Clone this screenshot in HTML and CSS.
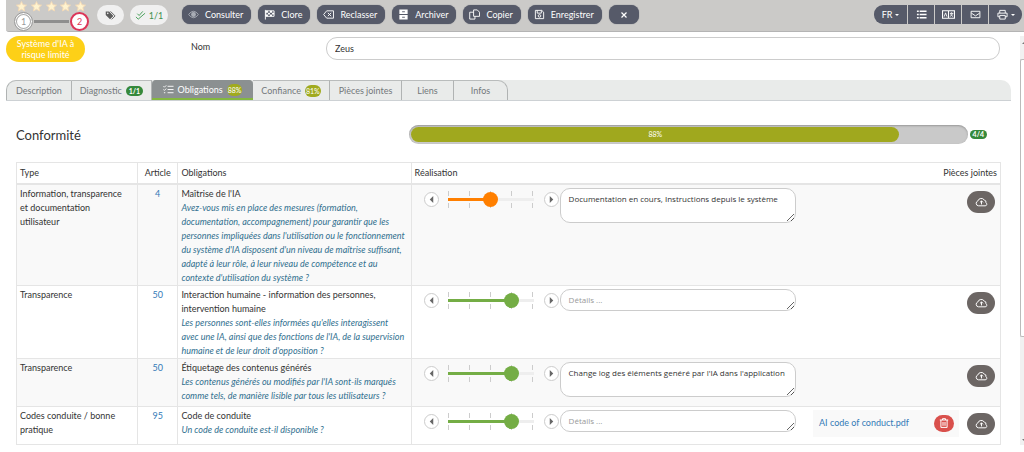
FILE: index.html
```html
<!DOCTYPE html>
<html lang="fr">
<head>
    <meta charset="UTF-8">
    <meta name="viewport" content="width=device-width, initial-scale=1.0">
    <title>Zeus - Obligations</title>
    <link rel="stylesheet" href="styles.css">
</head>
<body>
    <svg class="sprite" aria-hidden="true">
        <symbol id="star" viewBox="0 0 12 12"><path d="M6 .6l1.6 3.5 3.9.4-2.9 2.6.8 3.8L6 9 2.6 10.9l.8-3.8L.5 4.5l3.9-.4z"/></symbol>
        <symbol id="left" viewBox="0 0 8 8"><path d="M6 0v8L2 4z"/></symbol>
        <symbol id="right" viewBox="0 0 8 8"><path d="M2 0v8l4-4z"/></symbol>
        <symbol id="cloud" viewBox="0 0 16 12"><path d="M4.3 10.7a3.1 3.1 0 0 1-.8-6A4.4 4.4 0 0 1 11.4 3.6a2.6 2.6 0 0 1 2 3.3 2 2 0 0 1-.9 3.8zM8 9V4.800M6.200 6.400L8 4.600l1.800 1.800" fill="none" stroke="currentColor" stroke-width="1.200"/></symbol>
    </svg>

    <header class="toolbar">
        <div class="progress-steps">
            <div class="stars">
                <svg><use href="#star"/></svg><svg><use href="#star"/></svg><svg><use href="#star"/></svg><svg><use href="#star"/></svg><svg><use href="#star"/></svg>
            </div>
            <div class="steps">
                <span class="step">1</span>
                <span class="step-line"></span>
                <span class="step current">2</span>
            </div>
        </div>
        <div class="pills">
            <button class="pill" aria-label="Étiquettes">
                <svg class="icon" viewBox="0 0 12 12"><path d="M.8 1.500v4l4.700 4.700 3.700-3.700L4.500 1.500zM3 2.700a.9.900 0 1 1 0 1.800.9.900 0 0 1 0-1.800z" fill="#5c5c5c" fill-rule="evenodd"/><path d="M6 1.500l5 5-3.700 3.700" fill="none" stroke="#5c5c5c"/></svg>
            </button>
            <button class="pill check">
                <svg class="icon" viewBox="0 0 12 12"><path d="M2.500 4l2 2L8.500 1.500M1 7.500l2.500 2.500L11 3.500" fill="none" stroke="#3d9a50"/></svg>
                1/1
            </button>
        </div>
        <div class="actions">
            <button class="btn">
                <svg class="icon" viewBox="0 0 12 12"><path d="M.6 6Q6-1 11.400 6 6 13 .6 6z" fill="none" stroke="#a9adb6"/><circle cx="6" cy="6" r="2.600" fill="#a9adb6"/></svg>
                Consulter
            </button>
            <button class="btn">
                <svg class="icon" viewBox="0 0 12 12"><path d="M1.500 1v10.500M2 2h9v6H2z" fill="none" stroke="#fff"/><path d="M2 2h2.300v2H2zM6.500 2h2.300v2H6.500zM4.300 4h2.200v2H4.300zM8.800 4H11v2H8.800zM2 6h2.300v2H2zM6.500 6h2.300v2H6.500z" fill="#fff"/></svg>
                Clore
            </button>
            <button class="btn">
                <svg class="icon" viewBox="0 0 12 12"><path d="M4 2h7.500v8H4L.7 6zM5.300 4.200l3.600 3.600M8.900 4.200L5.300 7.800" fill="none" stroke="#fff"/></svg>
                Reclasser
            </button>
            <button class="btn">
                <svg class="icon" viewBox="0 0 12 12"><path d="M1.500.5h9v5h-9zM1.500 6.500h9v5h-9z" fill="#fff"/><path d="M4.500 3h3M4.500 9h3" stroke="#565a69"/></svg>
                Archiver
            </button>
            <button class="btn">
                <svg class="icon" viewBox="0 0 12 12"><path d="M5 1h4l2.500 2.500V8H5zM5 3.500H.8V11h5.700V8" fill="none" stroke="#fff"/></svg>
                Copier
            </button>
            <button class="btn">
                <svg class="icon" viewBox="0 0 12 12"><path d="M1.500 1.500h7l2 2v7h-9zM3.500 1.500v3h4.500v-3" fill="none" stroke="#fff"/><circle cx="6" cy="7.500" r="1.400" fill="none" stroke="#fff"/></svg>
                Enregistrer
            </button>
            <button class="btn close" aria-label="Fermer">
                <svg class="icon small" viewBox="0 0 8 8"><path d="M1.500 1.500l5 5M6.500 1.500l-5 5" stroke="#fff" stroke-width="1.200"/></svg>
            </button>
        </div>
        <div class="btn-group">
            <button class="wide">FR <span class="caret"></span></button>
            <button aria-label="Liste"><svg class="icon" viewBox="0 0 12 12"><path d="M1 2.500h2M1 6h2M1 9.500h2M4 2.500h7.500M4 6h7.500M4 9.500h7.500" stroke="#fff" stroke-width="1.600"/></svg></button>
            <button aria-label="Langue"><svg class="icon large" viewBox="0 0 12 12"><path d="M.5 2.500h11v7H.5zM6 2.500v7" fill="none" stroke="#fff"/><path d="M2 8l1.300-3.500L4.600 8M7.300 5h3M8.800 4v1M10 5L7.500 8M7.700 5.500L10.200 8" fill="none" stroke="#fff" stroke-width=".8"/></svg></button>
            <button aria-label="Courriel"><svg class="icon" viewBox="0 0 12 12"><path d="M1.200 2.500h9.600v7H1.200zM1.500 4.500L6 7.500l4.500-3" fill="none" stroke="#fff"/></svg></button>
            <button class="wide" aria-label="Imprimer"><svg class="icon" viewBox="0 0 12 12"><path d="M3 4.500v-3h6v3M3 8.500H1v-4h10v4H9M3 7h6v4H3z" fill="none" stroke="#fff"/></svg> <span class="caret"></span></button>
        </div>
    </header>

    <div class="page">
        <main>
            <div class="identity">
                <span class="risk">Système d'IA à<br>risque limité</span>
                <label for="nom">Nom</label>
                <input type="text" id="nom" value="Zeus">
            </div>

            <nav class="tabs">
                <a class="tab first" href="#description">Description</a>
                <a class="tab diagnostic" href="#diagnostic">Diagnostic <span class="badge green">1/1</span></a>
                <a class="tab active" href="#obligations">
                    <svg class="icon" viewBox="0 0 12 12"><path d="M.5 2.500l1 1 2-2M.5 6l1 1 2-2M1 9.500h1.500M5 2.500h6.500M5 6h6.500M5 9.500h6.500" fill="none" stroke="#fff"/></svg>
                    Obligations <span class="badge">88%</span>
                </a>
                <a class="tab confiance" href="#confiance">Confiance <span class="badge">81%</span></a>
                <a class="tab pieces" href="#pieces">Pièces jointes</a>
                <a class="tab" href="#liens">Liens</a>
                <a class="tab last" href="#infos">Infos</a>
            </nav>

            <section class="panel">
                <div class="summary">
                    <h1>Conformité</h1>
                    <div class="progress">
                        <div class="progress-bar" style="width: 88%">88%</div>
                    </div>
                    <span class="badge green">4/4</span>
                </div>

                <table>
                    <thead>
                        <tr>
                            <th class="col-type">Type</th>
                            <th class="col-article">Article</th>
                            <th class="col-obligation">Obligations</th>
                            <th class="col-real">Réalisation</th>
                            <th class="col-files">Pièces jointes</th>
                        </tr>
                    </thead>
                    <tbody>
                        <tr>
                            <td>Information, transparence<br>et documentation<br>utilisateur</td>
                            <td class="article"><a href="#article-4">4</a></td>
                            <td>Maîtrise de l'IA<p>Avez-vous mis en place des mesures (formation,<br>documentation, accompagnement) pour garantir que les<br>personnes impliquées dans l'utilisation ou le fonctionnement<br>du système d'IA disposent d'un niveau de maîtrise suffisant,<br>adapté à leur rôle, à leur niveau de compétence et au<br>contexte d'utilisation du système ?</p></td>
                            <td class="real">
                                <div class="real-row">
                                    <button class="arrow" aria-label="Diminuer"><svg><use href="#left"/></svg></button>
                                    <div class="slider"><input class="orange" type="range" min="0" max="4" value="2" style="--level: 50%" aria-label="Avancement"></div>
                                    <button class="arrow" aria-label="Augmenter"><svg><use href="#right"/></svg></button>
                                    <textarea class="tall" aria-label="Détails">Documentation en cours, Instructions depuis le système</textarea>
                                </div>
                            </td>
                            <td class="files"><div class="files-row"><button class="upload" aria-label="Ajouter"><svg><use href="#cloud"/></svg></button></div></td>
                        </tr>
                        <tr>
                            <td>Transparence</td>
                            <td class="article"><a href="#article-50">50</a></td>
                            <td>Interaction humaine - information des personnes,<br>intervention humaine<p>Les personnes sont-elles informées qu'elles interagissent<br>avec une IA, ainsi que des fonctions de l'IA, de la supervision<br>humaine et de leur droit d'opposition ?</p></td>
                            <td class="real">
                                <div class="real-row">
                                    <button class="arrow" aria-label="Diminuer"><svg><use href="#left"/></svg></button>
                                    <div class="slider"><input type="range" min="0" max="4" value="3" style="--level: 75%" aria-label="Avancement"></div>
                                    <button class="arrow" aria-label="Augmenter"><svg><use href="#right"/></svg></button>
                                    <textarea placeholder="Détails ..." aria-label="Détails"></textarea>
                                </div>
                            </td>
                            <td class="files"><div class="files-row"><button class="upload" aria-label="Ajouter"><svg><use href="#cloud"/></svg></button></div></td>
                        </tr>
                        <tr>
                            <td>Transparence</td>
                            <td class="article"><a href="#article-50">50</a></td>
                            <td>Étiquetage des contenus générés<p>Les contenus générés ou modifiés par l'IA sont-ils marqués<br>comme tels, de manière lisible par tous les utilisateurs ?</p></td>
                            <td class="real">
                                <div class="real-row">
                                    <button class="arrow" aria-label="Diminuer"><svg><use href="#left"/></svg></button>
                                    <div class="slider"><input type="range" min="0" max="4" value="3" style="--level: 75%" aria-label="Avancement"></div>
                                    <button class="arrow" aria-label="Augmenter"><svg><use href="#right"/></svg></button>
                                    <textarea class="tall" aria-label="Détails">Change log des éléments genéré par l'IA dans l'application</textarea>
                                </div>
                            </td>
                            <td class="files"><div class="files-row"><button class="upload" aria-label="Ajouter"><svg><use href="#cloud"/></svg></button></div></td>
                        </tr>
                        <tr>
                            <td>Codes conduite / bonne<br>pratique</td>
                            <td class="article"><a href="#article-95">95</a></td>
                            <td>Code de conduite<p>Un code de conduite est-il disponible ?</p></td>
                            <td class="real">
                                <div class="real-row">
                                    <button class="arrow" aria-label="Diminuer"><svg><use href="#left"/></svg></button>
                                    <div class="slider"><input type="range" min="0" max="4" value="3" style="--level: 75%" aria-label="Avancement"></div>
                                    <button class="arrow" aria-label="Augmenter"><svg><use href="#right"/></svg></button>
                                    <textarea placeholder="Détails ..." aria-label="Détails"></textarea>
                                </div>
                            </td>
                            <td class="files">
                                <div class="files-row">
                                    <div class="file">
                                        <a href="#fichier">AI code of conduct.pdf</a>
                                        <button class="delete" aria-label="Supprimer"><svg viewBox="0 0 10 10"><path d="M.8 2h8.400M3.500 2V.7h3V2M1.900 2v7.400h6.200V2M4 4v3.800M6 4v3.800" fill="none" stroke="#fff"/></svg></button>
                                    </div>
                                    <button class="upload" aria-label="Ajouter"><svg><use href="#cloud"/></svg></button>
                                </div>
                            </td>
                        </tr>
                    </tbody>
                </table>
            </section>
        </main>
        <div class="scrollbar">
            <span class="scroll-arrow up"></span>
            <span class="scroll-thumb"></span>
            <span class="scroll-arrow down"></span>
        </div>
    </div>
</body>
</html>
```
FILE: styles.css
```css
* {
    box-sizing: border-box;
}
body {
    margin: 0;
    background-color: #fff;
    color: #333;
    font-family: Lato, "Open Sans", sans-serif;
    font-size: 9px;
    line-height: 14px;
}
button, input, textarea {
    font-family: inherit;
    font-size: inherit;
    color: inherit;
    margin: 0;
}
button {
    border: none;
    padding: 0;
    cursor: pointer;
}
a {
    color: #337ab7;
    text-decoration: none;
}
.sprite {
    display: none;
}
.icon {
    width: 11px;
    height: 11px;
    flex: none;
}
.icon.small {
    width: 8px;
    height: 8px;
}
.icon.large {
    width: 13px;
    height: 13px;
}

/* toolbar */
.toolbar {
    display: flex;
    align-items: flex-start;
    height: 32px;
    margin-left: 6px;
    padding-right: 2px;
    background-color: #cbcac8;
    border-bottom: 1px solid #b4b4b4;
    border-bottom-left-radius: 3px;
}
.progress-steps {
    width: 75px;
    margin-left: 8px;
}
.stars {
    display: flex;
    justify-content: space-between;
    padding: 1px 3px 0 2px;
}
.stars svg {
    width: 11px;
    height: 11px;
    fill: #fff3cf;
    stroke: #f3d9b5;
    stroke-width: 1px;
}
.steps {
    display: flex;
    align-items: center;
}
.step {
    display: flex;
    align-items: center;
    justify-content: center;
    width: 19px;
    height: 19px;
    border: 1px solid #999;
    border-radius: 50%;
    background-color: #fff;
    box-shadow: inset 0 0 0 1px #fff, inset 0 0 0 2px #aaa;
    color: #999;
}
.step.current {
    border: 2px solid #dc3558;
    box-shadow: none;
    color: #dc3558;
}
.step-line {
    flex: 1;
    height: 3px;
    margin: 0 1px;
    background-color: #8e8e8e;
}
.pills {
    display: flex;
    gap: 6px;
    margin: 5px 0 0 8px;
}
.pill {
    display: flex;
    align-items: center;
    justify-content: center;
    gap: 3px;
    min-width: 27px;
    height: 20px;
    border-radius: 10px;
    background-color: #f0f0f0;
}
.pill.check {
    min-width: 38px;
    color: #3d8f4f;
}
.actions {
    display: flex;
    gap: 7px;
    margin: 5px 0 0 14px;
}
.btn {
    display: flex;
    align-items: center;
    gap: 6px;
    height: 19px;
    padding: 0 8px 0 6px;
    border-radius: 8px;
    background-color: #565a69;
    box-shadow: 0 0 1px #565a69;
    color: #fff;
}
.btn.close {
    justify-content: center;
    width: 30px;
    padding: 0;
}
.btn-group {
    display: flex;
    gap: 1px;
    margin: 5px 0 0 auto;
    border-radius: 9px;
    overflow: hidden;
}
.btn-group button {
    display: flex;
    align-items: center;
    justify-content: center;
    gap: 3px;
    width: 26px;
    height: 19px;
    background-color: #565a69;
    color: #fff;
}
.btn-group .wide {
    width: 33px;
}
.caret {
    border: 2px solid transparent;
    border-top-color: #fff;
    border-bottom: none;
}

/* page */
.page {
    display: flex;
    padding-top: 4px;
}
main {
    flex: 1;
    min-width: 0;
    padding: 0 9px 0 6px;
}
.identity {
    display: flex;
    align-items: flex-start;
    padding-right: 11px;
}
.risk {
    width: 79px;
    padding: 2px 0;
    border-radius: 13px;
    background-color: #fdd017;
    color: #fff;
    line-height: 11px;
    text-align: center;
}
.identity label {
    width: 135px;
    margin: 4px 0 0 106px;
}
.identity input {
    flex: 1;
    min-width: 0;
    height: 23px;
    margin-top: 1px;
    padding: 0 8px;
    border: 1px solid #ccc;
    border-radius: 11px;
}

/* tabs */
.tabs {
    display: flex;
    height: 21px;
    margin-top: 18px;
    background-color: #e9ebea;
    border-bottom: 1px solid #cdd1d4;
    border-radius: 10px 10px 0 0;
}
.tab {
    display: flex;
    align-items: center;
    justify-content: center;
    gap: 4px;
    min-width: 52px;
    border-top: 1px solid #b9bcbc;
    border-right: 1px solid #b0b3b3;
    color: #73787b;
}
.tab.first {
    min-width: 66px;
    border-left: 1px solid #b0b3b3;
    border-top-left-radius: 10px;
}
.tab.diagnostic {
    min-width: 80px;
}
.tab.active {
    min-width: 101px;
    background-color: #8b9091;
    border-top-color: #8b9091;
    border-right: none;
    border-bottom: 2px solid #84b840;
    border-radius: 4px 4px 0 0;
    color: #fff;
}
.tab.confiance {
    min-width: 77px;
}
.tab.pieces {
    min-width: 72px;
}
.tab.last {
    min-width: 54px;
    border-top-right-radius: 10px;
}
.badge {
    padding: 0 1px;
    border-radius: 6px;
    background-color: #a0aa1e;
    color: #fff;
    font-size: 7px;
    line-height: 12px;
}
.badge.green {
    padding: 0 3px;
    background-color: #35893b;
    font-weight: bold;
    line-height: 10px;
}
.summary .badge {
    line-height: 9px;
}

/* panel */
.panel {
    padding: 24px 10px 0 10px;
}
.summary {
    display: flex;
    align-items: center;
    gap: 2px;
    padding-right: 14px;
}
.summary h1 {
    width: 40%;
    margin: 0;
    font-size: 13px;
    font-weight: normal;
}
.progress {
    flex: 1;
    height: 19px;
    margin-left: 3px;
    padding: 2px;
    border-radius: 10px;
    background-color: #c9c9c9;
    box-shadow: inset 0 1px 2px #999;
}
.progress-bar {
    height: 15px;
    border-radius: 8px;
    background-color: #a0a81e;
    color: #fff;
    font-size: 7px;
    text-align: center;
}

table {
    width: 100%;
    margin-top: 18px;
    border-collapse: collapse;
    table-layout: fixed;
    border: 1px solid #e5e5e5;
}
th {
    height: 21px;
    padding: 0 3px;
    border-right: 1px solid #e5e5e5;
    border-bottom: 2px solid #e5e5e5;
    font-weight: normal;
    text-align: left;
}
.col-type {
    width: 12.3%;
}
.col-article {
    width: 4.1%;
    padding: 0;
    text-align: center;
}
.col-obligation {
    width: 23.7%;
}
.col-real {
    width: 39.5%;
    border-right: none;
}
.col-files {
    text-align: right;
}
td {
    padding: 2px 3px 0 3px;
    border-right: 1px solid #e5e5e5;
    border-bottom: 1px solid #e5e5e5;
    vertical-align: top;
}
tbody tr:nth-child(odd) {
    background-color: #f9f9f9;
}
td p {
    margin: 0;
    color: #31708f;
    font-style: italic;
    white-space: nowrap;
}
.article {
    text-align: center;
}
.real {
    padding-top: 3px;
    padding-left: 12px;
    border-right: none;
}
.real-row {
    display: flex;
    align-items: flex-start;
}
.arrow {
    display: flex;
    align-items: center;
    justify-content: center;
    flex: none;
    width: 15px;
    height: 15px;
    margin-top: 4px;
    border: 1px solid #ccc;
    border-radius: 50%;
    background-color: #fff;
}
.arrow svg {
    width: 7px;
    height: 7px;
    fill: #666;
}
.slider {
    flex: none;
    width: 86px;
    height: 17px;
    margin: 3px 10px 0 9px;
    background-image:
        repeating-linear-gradient(to right, #ccc 0 1px, transparent 1px 21px),
        repeating-linear-gradient(to right, #ccc 0 1px, transparent 1px 21px);
    background-size: 100% 5px;
    background-position: top, bottom;
    background-repeat: no-repeat;
}
.slider input {
    --color: #74ad45;
    -webkit-appearance: none;
    appearance: none;
    display: block;
    width: calc(100% + 14px);
    height: 17px;
    margin: 0 -7px;
    background: linear-gradient(to right, var(--color) var(--level), #eee var(--level)) center / calc(100% - 14px) 3px no-repeat;
}
.slider input.orange {
    --color: #ff7f00;
}
.slider input::-webkit-slider-thumb {
    -webkit-appearance: none;
    width: 15px;
    height: 15px;
    border-radius: 50%;
    background-color: var(--color);
}
textarea {
    flex: none;
    width: 236px;
    height: 22px;
    margin: 0 0 4px 1px;
    padding: 3px 8px;
    border: 1px solid #ccc;
    border-radius: 10px;
    background-color: #fff;
    font-family: "Open Sans", sans-serif;
    font-size: 8px;
    line-height: 14px;
    overflow: hidden;
}
textarea.tall {
    height: 35px;
    margin-bottom: 9px;
}
textarea::placeholder {
    color: #999;
}
.files {
    padding-top: 3px;
}
.files-row {
    display: flex;
    align-items: flex-start;
    justify-content: flex-end;
    gap: 8px;
    padding-right: 2px;
}
.upload {
    display: flex;
    align-items: center;
    justify-content: center;
    width: 28px;
    height: 22px;
    margin-top: 3px;
    border-radius: 11px;
    background-color: #6c6664;
    color: #fff;
}
.upload svg {
    width: 13px;
    height: 10px;
}
.file {
    display: flex;
    align-items: center;
    justify-content: space-between;
    width: 146px;
    height: 27px;
    padding: 0 5px 0 6px;
    background-color: #f9f9f9;
}
.delete {
    display: flex;
    align-items: center;
    justify-content: center;
    width: 20px;
    height: 17px;
    border-radius: 9px;
    background-color: #d9504c;
}
.delete svg {
    width: 10px;
    height: 10px;
}
tbody tr:last-child td {
    height: 38px;
}

/* scrollbar */
.scrollbar {
    display: flex;
    flex-direction: column;
    width: 4px;
    overflow: hidden;
    background-color: #f1f1f1;
}
.scroll-arrow {
    align-self: flex-start;
    margin: 5px 0 0 2px;
    border: 3px solid transparent;
    border-top: none;
    border-bottom-color: #777;
}
.scroll-arrow.down {
    margin: auto 0 3px 2px;
    border: 3px solid transparent;
    border-bottom: none;
    border-top-color: #777;
}
.scroll-thumb {
    height: 68%;
    margin-top: 15px;
    border: 1px solid #bbb;
    border-right: none;
    border-radius: 2px 0 0 2px;
    background-color: #fff;
}
```
